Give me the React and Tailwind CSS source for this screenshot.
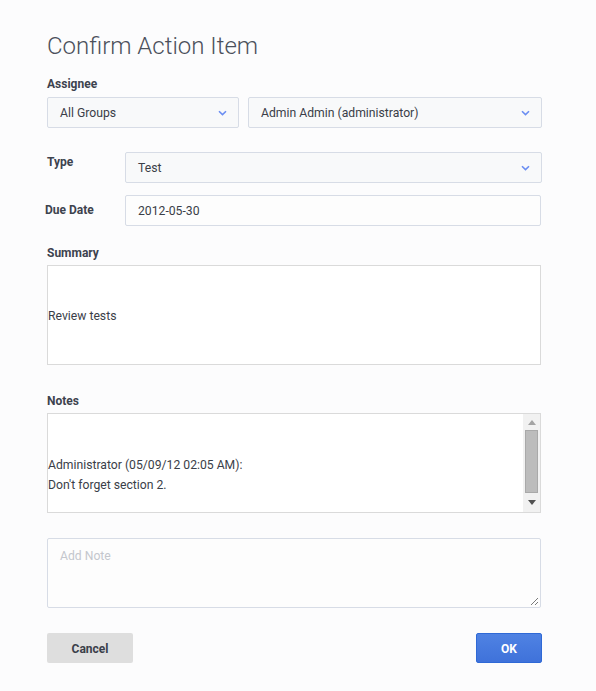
import React from "react";

const Chevron = () => (
  <svg width="9" height="6" viewBox="0 0 9 6" className="shrink-0">
    <path d="M1 1.2 L4.5 4.6 L8 1.2" fill="none" stroke="#6b8ef2" strokeWidth="1.6" />
  </svg>
);

function SelectBox({ value, className = "" }) {
  return (
    <div
      className={`h-[31px] flex items-center justify-between pl-[12px] pr-[11px] rounded-[2px] border border-[#d7dce6] bg-[#f8f9fa] text-[12.2px] text-[#3a3e48] ${className}`}
    >
      <span className="pt-[2px]">{value}</span>
      <Chevron />
    </div>
  );
}

export default function App() {
  const label = "text-[12px] leading-[16px] font-bold text-[#3d424e]";

  return (
    <div
      className="min-h-[691px] w-[596px] bg-[#fcfcfd] pl-[47px] pr-[54px] pt-[32px]"
      style={{ fontFamily: "Roboto, 'Liberation Sans', sans-serif" }}
    >
      <h1 className="text-[24px] leading-[28px] font-light text-[#4b505b]">Confirm Action Item</h1>

      {/* Assignee */}
      <div className={`${label} mt-[16px]`}>Assignee</div>
      <div className="flex gap-[9px] mt-[5px]">
        <SelectBox value="All Groups" className="w-[192px]" />
        <SelectBox value="Admin Admin (administrator)" className="flex-1" />
      </div>

      {/* Type */}
      <div className="flex items-start mt-[24px]">
        <div className={`${label} w-[78px] pt-[2px]`}>Type</div>
        <SelectBox value="Test" className="flex-1" />
      </div>

      {/* Due Date */}
      <div className="flex items-center mt-[12px]">
        <div className={`${label} w-[78px] -ml-[2px] pb-[2px]`}>Due Date</div>
        <div className="flex-1 ml-[2px] mr-[1px] h-[31px] flex items-center pl-[12px] pt-[2px] rounded-[2px] border border-[#d7dce6] bg-[#fdfdfd] text-[12.2px] text-[#3a3e48]">
          2012-05-30
        </div>
      </div>

      {/* Summary */}
      <div className={`${label} mt-[19px]`}>Summary</div>
      <div className="mt-[4px] mr-[1px] h-[100px] flex items-center pt-[3px] border border-[#dadada] bg-white text-[12.2px] text-[#3a3e48]">
        Review tests
      </div>

      {/* Notes */}
      <div className={`${label} mt-[28px]`}>Notes</div>
      <div className="mt-[4px] mr-[1px] h-[100px] flex border border-[#dadada] bg-white text-[12.2px] leading-[20px] text-[#3a3e48]">
        <div className="flex-1 pt-[41px]">
          <div>Administrator (05/09/12 02:05 AM):</div>
          <div>Don't forget section 2.</div>
        </div>
        <div className="w-[17px] bg-[#f1f1f1] flex flex-col items-center">
          <div className="h-[16px] flex items-center justify-center">
            <svg width="8" height="5" viewBox="0 0 8 5">
              <path d="M0 5 L4 0 L8 5 Z" fill="#a3a3a3" />
            </svg>
          </div>
          <div className="w-[13px] h-[63px] bg-[#bcbcbc] border border-[#a9a9a9]" />
          <div className="flex-1 flex items-center justify-center">
            <svg width="8" height="5" viewBox="0 0 8 5">
              <path d="M0 0 L8 0 L4 5 Z" fill="#505050" />
            </svg>
          </div>
        </div>
      </div>

      {/* Add Note */}
      <div className="mt-[25px] mr-[1px] h-[70px] flex flex-col border border-[#d7dce6] bg-[#fdfdfd] rounded-[2px]">
        <div className="flex-1 pl-[12px] pt-[8px] text-[12.2px] text-[#c4c7cd]">Add Note</div>
        <div className="flex justify-end pr-[1px] pb-[1px]">
          <svg width="9" height="9" viewBox="0 0 9 9">
            <path d="M8 1 L1 8 M8 5 L5 8" stroke="#7a7a7a" strokeWidth="1" />
          </svg>
        </div>
      </div>

      {/* Buttons */}
      <div className="mt-[25px] flex justify-between">
        <button className="w-[86px] h-[30px] pt-[1px] rounded-[2px] bg-[#dedede] text-[12px] font-bold text-[#3b3f4a]">
          Cancel
        </button>
        <button className="w-[66px] h-[30px] pt-[1px] rounded-[2px] border border-[#2f69d6] bg-gradient-to-b from-[#4f82e3] to-[#3f72da] text-[12px] font-bold text-white">
          OK
        </button>
      </div>
    </div>
  );
}
